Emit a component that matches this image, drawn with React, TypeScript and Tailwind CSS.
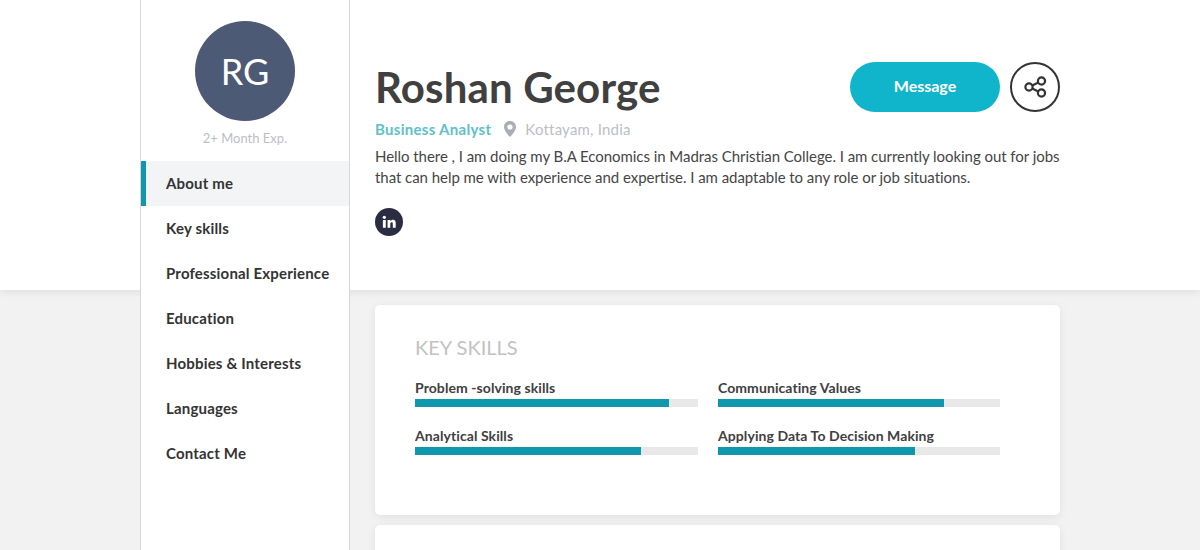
import React from 'react';

const navItems = ['About me', 'Key skills', 'Professional Experience', 'Education', 'Hobbies & Interests', 'Languages', 'Contact Me'];

const skills = [
  { name: 'Problem -solving skills', value: 89.8 },
  { name: 'Communicating Values', value: 80 },
  { name: 'Analytical Skills', value: 80 },
  { name: 'Applying Data To Decision Making', value: 70 },
];

function ShareIcon() {
  return (
    <svg width="24" height="24" viewBox="0 0 24 24" fill="none" stroke="#333333" strokeWidth="2.200">
      <circle cx="18.500" cy="6" r="3.600" />
      <circle cx="6" cy="12" r="3.600" />
      <circle cx="18.500" cy="18" r="3.600" />
      <path d="M9.300 10.400 15.300 7.600M9.300 13.600l6 2.800" />
    </svg>
  );
}

function LinkedinIcon() {
  return (
    <svg width="14" height="14" viewBox="0 0 24 24" fill="#ffffff">
      <circle cx="4" cy="4" r="2.800" />
      <path d="M1.500 8.500h5V22h-5zM9.500 8.500h4.800v2c.8-1.400 2.500-2.400 4.500-2.400 3.800 0 4.700 2.500 4.700 5.900V22h-5v-6.900c0-1.700-.4-2.800-1.900-2.800-1.700 0-2.400 1.200-2.400 2.900V22h-4.700z" />
    </svg>
  );
}

function PinIcon() {
  return (
    <svg width="12" height="16" viewBox="0 0 12 16" fill="#aaadb5" className="ml-[13px]">
      <path
        fillRule="evenodd"
        d="M6 0C2.700 0 0 2.600 0 5.900 0 9.600 4.300 14 6 16c1.700-2 6-6.400 6-10.100C12 2.600 9.300 0 6 0zm0 3.400a2.600 2.600 0 1 1 0 5.200 2.600 2.600 0 0 1 0-5.200z"
      />
    </svg>
  );
}

export default function App() {
  return (
    <div className="relative h-[550px] overflow-hidden bg-[#f2f2f2] font-['Lato','Liberation_Sans',sans-serif]">
      {/* white band behind the header */}
      <div className="absolute inset-x-0 top-0 h-[290px] bg-white shadow-[0_2px_8px_rgba(0,0,0,0.08)]" />

      <div className="relative mx-auto flex h-full w-[920px]">
        {/* Sidebar */}
        <aside className="flex h-full w-[210px] shrink-0 flex-col border-x border-[#d5d7dc] bg-white">
          <div className="mt-[21px] flex h-[100px] w-[100px] items-center justify-center self-center rounded-full bg-[#4d5a75] text-[36px] text-white">
            RG
          </div>
          <div className="mt-[8px] h-[20px] text-center text-[13px] leading-[19px] text-[#bcbec6]">2+ Month Exp.</div>
          <nav className="mt-[12px] flex flex-col">
            {navItems.map((item, i) => (
              <div
                key={item}
                className={`flex h-[45px] items-center text-[15px] font-bold tracking-[0.18px] text-[#333333] ${
                  i === 0 ? 'border-l-[5px] border-[#1097ad] bg-[#f3f4f6] pl-[20px]' : 'pl-[25px]'
                }`}
              >
                {item}
              </div>
            ))}
          </nav>
        </aside>

        {/* Main */}
        <main className="ml-[25px] flex w-[685px] flex-col">
          <div className="h-[290px] shrink-0 pt-[62px]">
            <div className="flex items-start justify-between">
              <h1 className="text-[42px] font-bold leading-[50px] tracking-[0.15px] text-[#404040]">Roshan George</h1>
              <div className="flex items-center gap-[10px]">
                <button className="flex h-[50px] w-[150px] items-center justify-center rounded-full bg-[#10b4cb] pb-[2px] text-[16px] font-bold text-white">
                  Message
                </button>
                <button className="flex h-[50px] w-[50px] items-center justify-center rounded-full border-2 border-[#333333]">
                  <ShareIcon />
                </button>
              </div>
            </div>
            <div className="mt-[7px] flex h-[20px] items-center text-[15px]">
              <span className="font-bold tracking-[0.3px] text-[#5fc0c8]">Business Analyst</span>
              <PinIcon />
              <span className="ml-[9px] tracking-[0.2px] text-[#bcbec6]">Kottayam, India</span>
            </div>
            <p className="mt-[7px] text-[15px] leading-[21px] tracking-[-0.05px] text-[#454545]">
              Hello there , I am doing my B.A Economics in Madras Christian College. I am currently looking out for jobs that can help me with experience and expertise. I am adaptable to any role or job situations.
            </p>
            <div className="mt-[20px] flex h-[28px] w-[28px] items-center justify-center rounded-full bg-[#2a2d42]">
              <LinkedinIcon />
            </div>
          </div>

          <section className="mt-[15px] h-[210px] shrink-0 rounded-[5px] bg-white px-[40px] pt-[29px] shadow-[0_2px_8px_rgba(0,0,0,0.08)]">
            <h2 className="text-[20px] leading-[26px] text-[#c2c2c2]">KEY SKILLS</h2>
            <div className="mt-[19px] grid w-[585px] grid-cols-[283px_282px] gap-x-[20px] gap-y-[20px]">
              {skills.map((s) => (
                <div key={s.name}>
                  <div className="text-[14px] font-bold leading-[18px] tracking-[0.08px] text-[#404040]">{s.name}</div>
                  <div className="mt-[2px] h-[8px] bg-[#e8e8e8]">
                    <div className="h-full bg-[#1097ad]" style={{ width: `${s.value}%` }} />
                  </div>
                </div>
              ))}
            </div>
          </section>

          <section className="mt-[10px] h-[100px] shrink-0 rounded-[5px] bg-white shadow-[0_2px_8px_rgba(0,0,0,0.08)]" />
        </main>
      </div>
    </div>
  );
}
